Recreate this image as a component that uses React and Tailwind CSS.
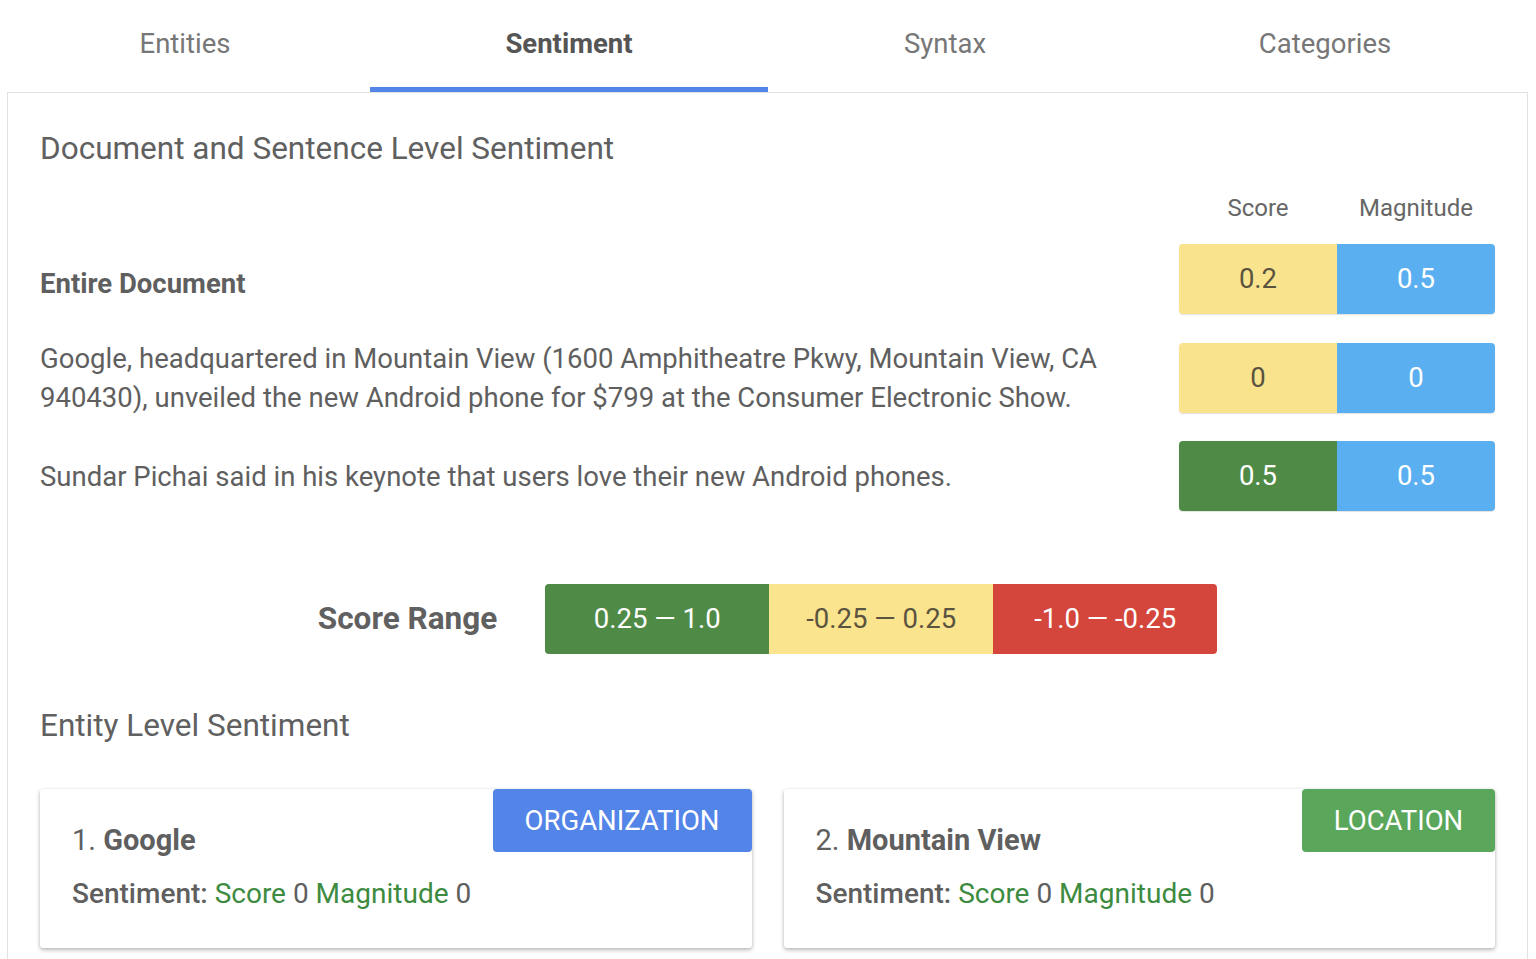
import React from 'react';

const tabs = [
  { label: "Entities", w: "w-[370px]" },
  { label: "Sentiment", w: "w-[398px]", active: true },
  { label: "Syntax", w: "w-[354px]" },
  { label: "Categories", w: "w-[406px]" },
];

const rows = [
  { text: "Google, headquartered in Mountain View (1600 Amphitheatre Pkwy, Mountain View, CA 940430), unveiled the new Android phone for $799 at the Consumer Electronic Show.", score: "0", mag: "0", scoreCls: "bg-[#fae38d] text-[#5a5340]", mt: "mt-[25px]" },
  { text: "Sundar Pichai said in his keynote that users love their new Android phones.", score: "0.5", mag: "0.5", scoreCls: "bg-[#4f8b46] text-white", mt: "mt-[24px]" },
];

const entities = [
  { n: "1.", name: "Google", type: "ORGANIZATION", badge: "bg-[#5384e8] w-[259px]" },
  { n: "2.", name: "Mountain View", type: "LOCATION", badge: "bg-[#5aa65a] w-[193px]" },
];

const ScorePair = ({ score, mag, scoreCls }) => (
  <div className="flex w-[316px] h-[70px] rounded-[4px] overflow-hidden text-[27.5px] shadow-[0_1px_1px_rgba(0,0,0,0.12)]">
    <div className={`w-[158px] flex items-center justify-center ${scoreCls}`}>{score}</div>
    <div className="w-[158px] flex items-center justify-center bg-[#5aaff0] text-white">{mag}</div>
  </div>
);

const App = () => {
  return (
    <div className="w-[1536px] h-[959px] overflow-hidden bg-white text-[#616161]" style={{ fontFamily: "Roboto, 'Liberation Sans', sans-serif" }}>
      {/* tabs */}
      <div className="flex h-[92px]">
        {tabs.map((t) => (
          <div
            key={t.label}
            className={`${t.w} flex items-center justify-center text-[27.5px] ${t.active ? "font-bold text-[#555555] border-b-[5px] border-[#5384e8]" : "text-[#777777] pb-[4px]"}`}
          >
            {t.label}
          </div>
        ))}
      </div>

      <div className="ml-[7px] w-[1521px] h-[880px] border border-[#e2e2e2] px-[32px] pt-[37px]">
        <h2 className="text-[31.5px] leading-[38px] text-[#606060]">Document and Sentence Level Sentiment</h2>

        <div className="flex justify-end mt-[25px] text-[24px] leading-[30px] text-[#666666]">
          <div className="w-[158px] text-center">Score</div>
          <div className="w-[158px] text-center">Magnitude</div>
        </div>

        <div className="flex items-center justify-between mt-[21px]">
          <div className="text-[27.5px] font-bold text-[#5f5f5f] pt-[10px]">Entire Document</div>
          <ScorePair score="0.2" mag="0.5" scoreCls="bg-[#fae38d] text-[#5a5340]" />
        </div>

        {rows.map((r, i) => (
          <div key={i} className={`flex items-center justify-between ${r.mt}`}>
            <div className="w-[1100px] text-[27.5px] leading-[39px] text-[#5f5f5f]">{r.text}</div>
            <ScorePair score={r.score} mag={r.mag} scoreCls={r.scoreCls} />
          </div>
        ))}

        {/* score range */}
        <div className="flex items-center justify-center gap-[48px] mt-[73px]">
          <div className="text-[31.5px] font-bold text-[#606060]">Score Range</div>
          <div className="flex h-[70px] rounded-[4px] overflow-hidden text-[27.5px]">
            <div className="w-[224px] flex items-center justify-center bg-[#4f8b46] text-white">0.25 — 1.0</div>
            <div className="w-[224px] flex items-center justify-center bg-[#fae48e] text-[#5a5340]">-0.25 — 0.25</div>
            <div className="w-[224px] flex items-center justify-center bg-[#d4463c] text-white">-1.0 — -0.25</div>
          </div>
        </div>

        <h2 className="text-[31.5px] leading-[38px] text-[#606060] mt-[53px]">Entity Level Sentiment</h2>

        <div className="grid grid-cols-2 gap-[32px] mt-[44px]">
          {entities.map((e) => (
            <div key={e.name} className="relative h-[159px] rounded-[3px] bg-white shadow-[0_2px_4px_rgba(0,0,0,0.28),0_0_2px_rgba(0,0,0,0.08)] pl-[32px] pt-[33px]">
              <div className={`absolute top-0 right-0 h-[63px] rounded-[4px] ${e.badge} flex items-center justify-center text-white text-[27.5px]`}>
                {e.type}
              </div>
              <div className="text-[29px] leading-[36px] text-[#5f5f5f]">
                {e.n} <span className="font-bold">{e.name}</span>
              </div>
              <div className="text-[28px] leading-[36px] mt-[18px] text-[#5f5f5f]">
                <span className="font-medium">Sentiment:</span>{" "}
                <span className="text-[#3d8b40]">Score</span> 0{" "}
                <span className="text-[#3d8b40]">Magnitude</span> 0
              </div>
            </div>
          ))}
        </div>
      </div>
    </div>
  );
};

export default App;
